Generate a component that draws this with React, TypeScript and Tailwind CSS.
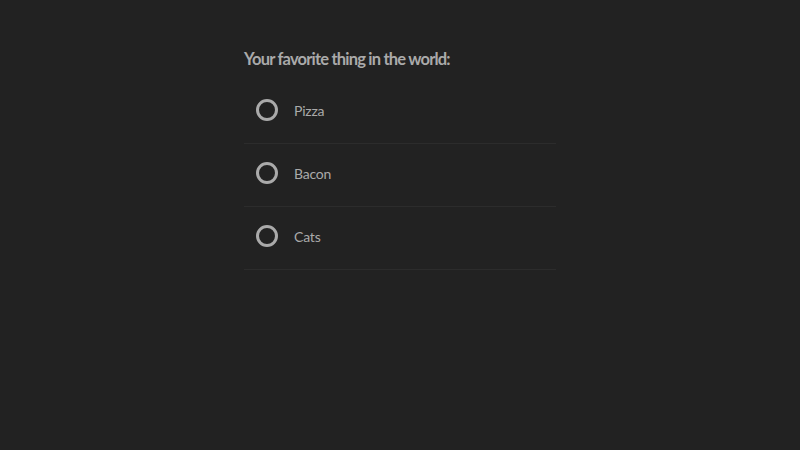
import React from "react";

const options = ["Pizza", "Bacon", "Cats"];

export default function App() {
  return (
    <div className="min-h-[450px] w-full bg-[#222222] pt-[47px]" style={{ fontFamily: "Lato, 'Open Sans', sans-serif" }}>
      <div className="ml-[244px] w-[312px]">
        <div className="text-[16.5px] leading-[24px] font-bold tracking-[-0.8px] text-[#aaaaaa]">Your favorite thing in the world:</div>
        <div className="mt-[10px]">
          {options.map((o) => (
            <label key={o} className="flex h-[63px] items-center border-b border-[#2c2c2c] pb-[4px] pl-[12px]">
              <span className="h-[22px] w-[22px] rounded-full border-[3px] border-[#aaaaaa]" />
              <span className="ml-[16px] text-[14px] tracking-[-0.2px] text-[#aaaaaa]">{o}</span>
            </label>
          ))}
        </div>
      </div>
    </div>
  );
}
